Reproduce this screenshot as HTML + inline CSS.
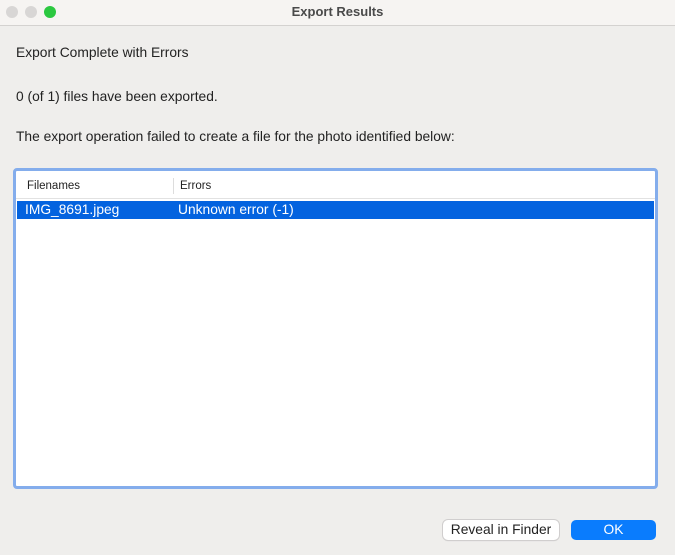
<!DOCTYPE html><html><head><style>
body{margin:0;width:675px;height:555px;background:#efeeec;font-family:"Liberation Sans",sans-serif;position:relative;overflow:hidden;color:#222}
.tb{position:absolute;left:0;top:0;width:675px;height:25px;background:#f6f4f2;border-bottom:1px solid #d4d2d0}
.dot{position:absolute;top:6px;width:12px;height:12px;border-radius:50%;background:#d8d6d5}
.t{position:absolute;font-size:13.8px;white-space:nowrap}
.box{position:absolute;left:13px;top:168px;width:639px;height:315px;border:3px solid #84adec;border-radius:4px;background:#fff}
.btn{position:absolute;top:520px;height:20px;border-radius:5px;font-size:13.8px;text-align:center;line-height:20px}
</style></head><body>
<div class="tb"><div class="dot" style="left:6px"></div><div class="dot" style="left:25px"></div><div class="dot" style="left:44px;background:#2bc840"></div>
<div class="t" style="left:0;width:675px;text-align:center;top:4px;font-weight:bold;color:#4a4a4a;font-size:13px">Export Results</div></div>
<div class="t" style="left:16px;top:45px">Export Complete with Errors</div>
<div class="t" style="left:16px;top:89px">0 (of 1) files have been exported.</div>
<div class="t" style="left:16px;top:129px">The export operation failed to create a file for the photo identified below:</div>
<div class="box">
<div style="position:absolute;left:0;top:0;right:0;height:27px;border-bottom:1px solid #e2e2e2"></div>
<div style="position:absolute;left:157px;top:7px;width:1px;height:16px;background:#ddd"></div>
<div class="t" style="left:11px;top:9px;font-size:11.5px">Filenames</div>
<div class="t" style="left:164px;top:9px;font-size:11.5px">Errors</div>
<div style="position:absolute;left:1px;right:1px;top:30px;height:18px;background:#0463df"></div>
<div class="t" style="left:9px;top:31px;color:#fff">IMG_8691.jpeg</div>
<div class="t" style="left:162px;top:31px;color:#fff">Unknown error (-1)</div>
</div>
<div class="btn" style="left:443px;width:116px;background:#fff;box-shadow:0 0 0 1px #d0cece,0 1px 1px #ccc">Reveal in Finder</div>
<div class="btn" style="left:571px;width:85px;background:#0a7cfd;color:#fff">OK</div>
</body></html>
